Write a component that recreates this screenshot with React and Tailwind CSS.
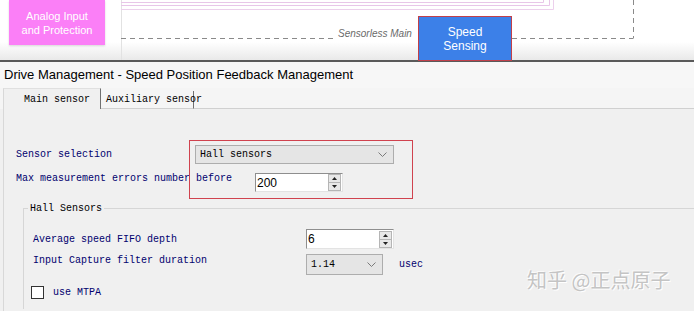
import React from 'react';

const mono = { fontFamily: '"Liberation Mono", "DejaVu Sans Mono", monospace' };

const Spinner = () => (
  <div className="flex flex-col w-[13px] h-[17px] ml-auto mr-[1px] border border-[#b5b5b5] bg-[#e8e8e8]">
    <div className="flex-1 flex items-center justify-center border-b border-[#b5b5b5]">
      <svg width="5" height="3" viewBox="0 0 5 3"><path d="M0 3 L2.5 0 L5 3 Z" fill="#222" /></svg>
    </div>
    <div className="flex-1 flex items-center justify-center">
      <svg width="5" height="3" viewBox="0 0 5 3"><path d="M0 0 L2.5 3 L5 0 Z" fill="#222" /></svg>
    </div>
  </div>
);

const SpinBox = ({ value, className }) => (
  <div className={`flex items-center bg-white border-t border-l border-[#8e8e8e] border-r border-b border-r-[#e3e3e3] border-b-[#e3e3e3] ${className}`}>
    <span className="pl-[1px] text-[12px] text-black" style={{ fontFamily: '"Liberation Sans", Arial, sans-serif' }}>{value}</span>
    <Spinner />
  </div>
);

const Chevron = () => (
  <svg width="9" height="5" viewBox="0 0 9 5"><path d="M0.5 0.5 L4.5 4.5 L8.5 0.5" fill="none" stroke="#7a7a7a" strokeWidth="1" /></svg>
);

const Select = ({ value, className }) => (
  <div className={`flex items-center bg-[#e5e5e5] border border-[#adadad] pl-[4px] pr-[6px] ${className}`}>
    <span className="text-[10px] text-black" style={mono}>{value}</span>
    <span className="ml-auto"><Chevron /></span>
  </div>
);

export default function App() {
  return (
    <div className="w-[694px] h-[311px] overflow-hidden bg-[#f0f0f0] relative" style={{ fontFamily: '"Liberation Sans", Arial, sans-serif' }}>
      {/* diagram strip */}
      <div className="relative h-[60px] bg-gradient-to-b from-white from-70% to-[#e9e9e9]">
        <svg className="absolute inset-0" width="694" height="60">
          <line x1="121.5" y1="0" x2="121.5" y2="60" stroke="#e2e2e2" />
          <path d="M121 2.5 H543.5 V0" fill="none" stroke="#e8c6e8" />
          <path d="M121 5.5 H549.5 V0" fill="none" stroke="#e8c6e8" />
          <path d="M121 9.5 H553.5 V0" fill="none" stroke="#ecd0ec" />
          <line x1="121" y1="38.5" x2="336" y2="38.5" stroke="#8a8a8a" strokeDasharray="5 4" />
          <line x1="512" y1="38.5" x2="633.5" y2="38.5" stroke="#8a8a8a" strokeDasharray="5 4" />
          <line x1="633.5" y1="0" x2="633.5" y2="38" stroke="#8a8a8a" strokeDasharray="5 4" />
        </svg>
        <div className="absolute left-[9px] top-0 w-[96px] h-[45px] bg-[#fb7ff7] flex flex-col items-center justify-center text-white text-[11px] leading-[14px] shadow-[0_1px_2px_rgba(0,0,0,0.15)]">
          <span>Analog Input</span>
          <span>and Protection</span>
        </div>
        <span className="absolute left-[338px] top-[26px] text-[10px] italic text-[#6a6a6a]">Sensorless Main</span>
        <div className="absolute left-[418px] top-[16px] w-[94px] h-[45px] bg-[#3c80e8] border border-[#c0404a] flex flex-col items-center justify-center text-white text-[12px] leading-[14px]">
          <span>Speed</span>
          <span>Sensing</span>
        </div>
      </div>
      <div className="h-[2px] bg-[#5a5a5a]" />

      {/* title */}
      <div className="h-[26px] bg-[#f7f7f7] flex items-center pl-[4px] text-[13px] text-black">
        Drive Management - Speed Position Feedback Management
      </div>

      {/* tabs */}
      <div className="flex items-end h-[21px] bg-[#f5f5f5] pl-[3px]">
        <div className="w-[98px] h-[21px] shrink-0 border-t border-l border-r border-t-[#e0e0e0] border-l-[#d8d8d8] border-r-[#707070] bg-[#f0f0f0] flex items-center pl-[20px] text-[10px] text-black whitespace-nowrap" style={mono}>
          Main sensor
        </div>
        <div className="w-[93px] h-[18px] shrink-0 border-r border-b border-r-[#707070] border-b-[#d0d0d0] flex items-center pl-[5px] text-[10px] text-black whitespace-nowrap" style={mono}>
          Auxiliary sensor
        </div>
        <div className="flex-1 h-[1px] bg-[#d0d0d0]" />
      </div>

      {/* panel */}
      <div className="ml-[3px] border-l border-[#d8d8d8] h-[202px] relative">
        <div className="pt-[35px] pl-[12px] text-[10px] text-[#00006e]" style={mono}>
          <div className="flex items-center h-[20px]">
            <span className="w-[179px]">Sensor selection</span>
            <Select value="Hall sensors" className="w-[199px] h-[19px]" />
          </div>
          <div className="flex items-start h-[28px] mt-[9px]">
            <span className="w-[239px] mt-[-2px]">Max measurement errors number before</span>
            <SpinBox value="200" className="w-[88px] h-[19px]" />
          </div>
        </div>

        <fieldset className="ml-[19px] mt-0 border-t border-l border-[#d6d6d6] pl-[9px] pb-[10px] min-w-0">
          <legend className="ml-[-5px] px-[2px] text-[10px] text-black" style={mono}>Hall Sensors</legend>
          <div className="text-[10px] text-[#00006e]" style={mono}>
            <div className="flex items-center h-[20px] mt-[13px]">
              <span className="w-[273px]">Average speed FIFO depth</span>
              <SpinBox value="6" className="w-[88px] h-[20px]" />
            </div>
            <div className="flex items-center h-[21px] mt-[5px]">
              <span className="w-[273px] mt-[-8px]">Input Capture filter duration</span>
              <Select value="1.14" className="w-[77px] h-[21px]" />
              <span className="ml-[16px]">usec</span>
            </div>
            <div className="flex items-center h-[14px] mt-[10px] -ml-[2px]">
              <span className="w-[13px] h-[13px] bg-white border border-[#333]" />
              <span className="ml-[9px]">use MTPA</span>
            </div>
          </div>
        </fieldset>

        {/* annotation */}
        <div className="absolute left-[185px] top-[31px] w-[224px] h-[59px] border border-[#d0424e]" />
      </div>

      <div
        className="absolute left-[527px] top-[268px] text-[20px] leading-[24px] text-[#c4c4c4]"
        style={{ fontFamily: '"Noto Sans CJK SC", sans-serif', textShadow: '1px 1px 0 #fff, -1px -1px 0 #fafafa' }}
      >
        知乎 @正点原子
      </div>
    </div>
  );
}
